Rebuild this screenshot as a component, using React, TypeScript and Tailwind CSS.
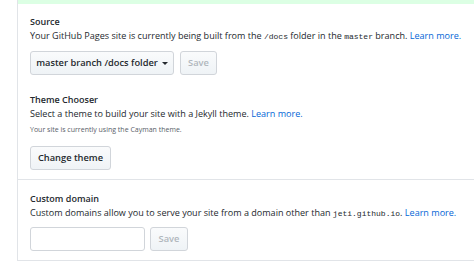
import React from "react";

const font = { fontFamily: '"Open Sans", "Noto Sans", sans-serif' };

function Btn({ children, disabled, className = "" }: { children: React.ReactNode; disabled?: boolean; className?: string }) {
  return (
    <button
      type="button"
      className={
        "h-[24px] whitespace-nowrap rounded-[3px] border border-[#d1d5da] bg-gradient-to-b from-[#fafbfc] to-[#eff3f6] text-[9.3px] font-semibold " +
        (disabled ? "text-[#b0b6bc] " : "text-[#24292e] ") +
        className
      }
    >
      {children}
    </button>
  );
}

function Mono({ children }: { children: React.ReactNode }) {
  return <code className="font-['Liberation_Mono',monospace] text-[8px]">{children}</code>;
}

export default function App() {
  return (
    <div className="h-[263px] w-[474px] overflow-hidden bg-white text-[#24292e]" style={font}>
      <div className="ml-[17px] w-[480px] border-l border-[#e1e4e8]">
        <div className="h-[4px] bg-[#dcffe4]" />
        <section className="pl-[12px] pt-[11px] pb-[9px]">
          <h3 className="text-[9px] font-semibold leading-[14px]">Source</h3>
          <p className="whitespace-nowrap text-[9.05px] leading-[14px]">
            Your GitHub Pages site is currently being built from the <Mono>/docs</Mono> folder in the{" "}
            <Mono>master</Mono> branch. <a className="text-[#0366d6]">Learn more.</a>
          </p>
          <div className="mt-[7px] flex gap-[6px]">
            <Btn className="flex w-[144px] items-center justify-center gap-[4px]">
              master branch /docs folder
              <span className="inline-block border-x-[3px] border-t-[3px] border-x-transparent border-t-[#24292e]" />
            </Btn>
            <Btn disabled className="w-[37px]">
              Save
            </Btn>
          </div>
          <h3 className="mt-[18px] text-[9px] font-semibold leading-[14px]">Theme Chooser</h3>
          <p className="whitespace-nowrap text-[9.05px] leading-[14px]">
            Select a theme to build your site with a Jekyll theme. <a className="text-[#0366d6]">Learn more.</a>
          </p>
          <p className="mt-[3px] text-[7px] leading-[12px] text-[#586069]">Your site is currently using the Cayman theme.</p>
          <Btn className="mt-[10px] w-[81px]">Change theme</Btn>
        </section>
        <section className="border-t border-[#e1e4e8] pl-[12px] pt-[12px] pb-[9px]">
          <h3 className="text-[9px] font-semibold leading-[14px]">Custom domain</h3>
          <p className="whitespace-nowrap text-[9.05px] leading-[14px]">
            Custom domains allow you to serve your site from a domain other than <Mono>jeti.github.io</Mono>.{" "}
            <a className="text-[#0366d6]">Learn more.</a>
          </p>
          <div className="mt-[6px] flex gap-[5px]">
            <input className="h-[24px] w-[115px] rounded-[3px] border border-[#d1d5da] bg-white" />
            <Btn disabled className="w-[38px]">
              Save
            </Btn>
          </div>
        </section>
        <div className="border-t border-[#e1e4e8]" />
      </div>
    </div>
  );
}
